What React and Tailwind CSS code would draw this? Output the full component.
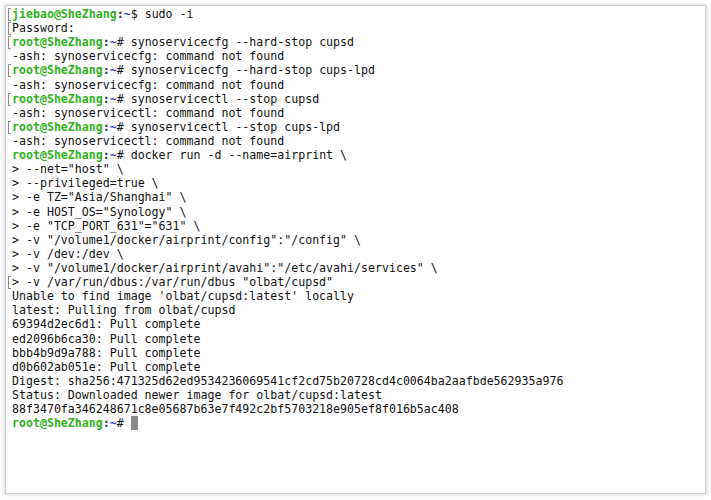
import React from "react";

const G = ({ children }) => <span className="text-[#2fb21c] font-bold">{children}</span>;
const Prompt = ({ user = "root", sym = "#" }) => (
  <>
    <G>{user}@SheZhang</G>
    <span className="text-[#333] font-bold">:</span>
    <span className="text-[#3a3ad8] font-bold">~</span>
    <span>{sym}</span>
  </>
);

const lines = [
  { m: true, c: <><Prompt user="jiebao" sym="$" /> sudo -i</> },
  { m: true, c: "Password:" },
  { m: true, c: <><Prompt /> synoservicecfg --hard-stop cupsd</> },
  { c: "-ash: synoservicecfg: command not found" },
  { m: true, c: <><Prompt /> synoservicecfg --hard-stop cups-lpd</> },
  { c: "-ash: synoservicecfg: command not found" },
  { m: true, c: <><Prompt /> synoservicectl --stop cupsd</> },
  { c: "-ash: synoservicectl: command not found" },
  { m: true, c: <><Prompt /> synoservicectl --stop cups-lpd</> },
  { c: "-ash: synoservicectl: command not found" },
  { c: <><Prompt /> docker run -d --name=airprint \</> },
  { c: '> --net="host" \\' },
  { c: "> --privileged=true \\" },
  { c: '> -e TZ="Asia/Shanghai" \\' },
  { c: '> -e HOST_OS="Synology" \\' },
  { c: '> -e "TCP_PORT_631"="631" \\' },
  { c: '> -v "/volume1/docker/airprint/config":"/config" \\' },
  { c: "> -v /dev:/dev \\" },
  { c: '> -v "/volume1/docker/airprint/avahi":"/etc/avahi/services" \\' },
  { m: true, c: '> -v /var/run/dbus:/var/run/dbus "olbat/cupsd"' },
  { c: "Unable to find image 'olbat/cupsd:latest' locally" },
  { c: "latest: Pulling from olbat/cupsd" },
  { c: "69394d2ec6d1: Pull complete" },
  { c: "ed2096b6ca30: Pull complete" },
  { c: "bbb4b9d9a788: Pull complete" },
  { c: "d0b602ab051e: Pull complete" },
  { c: "Digest: sha256:471325d62ed9534236069541cf2cd75b20728cd4c0064ba2aafbde562935a976" },
  { c: "Status: Downloaded newer image for olbat/cupsd:latest" },
  { c: "88f3470fa346248671c8e05687b63e7f492c2bf5703218e905ef8f016b5ac408" },
  {
    c: (
      <>
        <Prompt />{" "}
        <span className="inline-block w-[7px] h-[14px] bg-[#8a8a8a] align-[-3px]" />
      </>
    ),
  },
];

export default function App() {
  return (
    <div className="w-[711px] h-[500px] bg-white pt-[5px] pl-[5px] pr-[5px] pb-[6px]">
      <div className="h-full bg-white border border-[#cfcfcf] shadow-[0_0_4px_rgba(0,0,0,0.25)] pl-[6px] pt-[1px]">
        <div
          className="text-[11.6px] leading-[14.12px] text-[#111] whitespace-pre"
          style={{ fontFamily: '"DejaVu Sans Mono", "Liberation Mono", monospace' }}
        >
          {lines.map((l, i) => (
            <div key={i} className="relative h-[14.12px]">
              {l.m && (
                <span className="absolute left-[-4px] top-[1px] w-[3px] h-[13px] border-l border-t border-b border-[#8c8c8c]" />
              )}
              {l.c}
            </div>
          ))}
        </div>
      </div>
    </div>
  );
}
